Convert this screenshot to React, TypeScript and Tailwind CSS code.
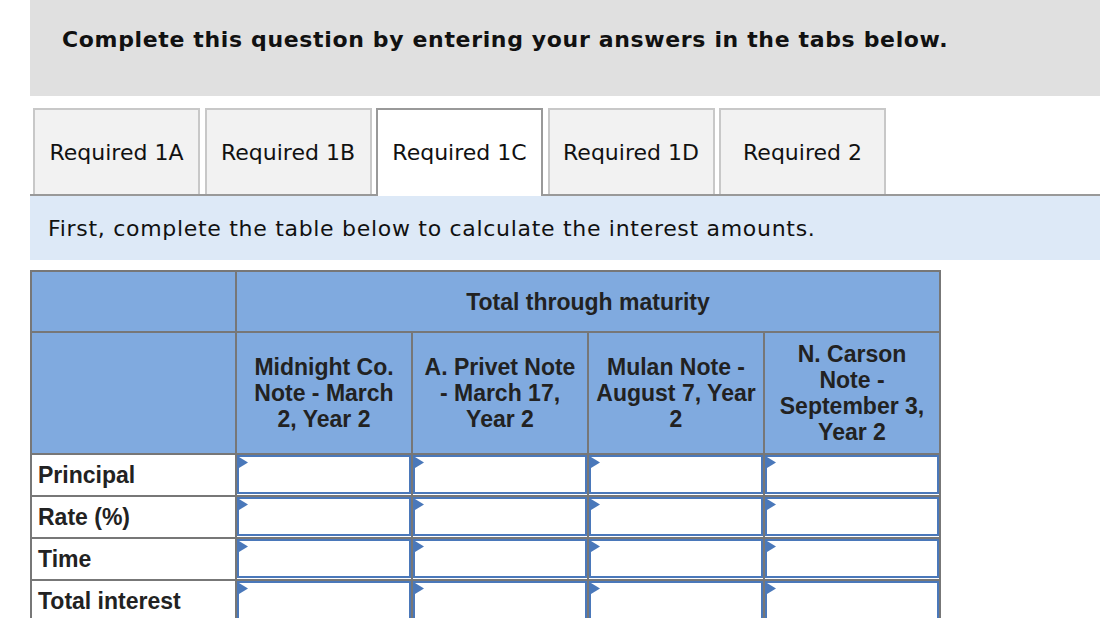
import React from "react";

const tabs = ["Required 1A", "Required 1B", "Required 1C", "Required 1D", "Required 2"];

const notes = [
  ["Midnight Co.", "Note - March", "2, Year 2"],
  ["A. Privet Note", "- March 17,", "Year 2"],
  ["Mulan Note -", "August 7, Year", "2"],
  ["N. Carson", "Note -", "September 3,", "Year 2"],
];

const rows = ["Principal", "Rate (%)", "Time", "Total interest"];

function InputCell() {
  return (
    <td className="border-2 border-[#777] p-0 align-top">
      <div className="relative h-[39px] border-2 border-[#4a78ba] bg-white">
        {/* little marker in the corner */}
        <svg className="absolute left-0 top-0" width="9" height="11" viewBox="0 0 9 11">
          <polygon points="0,0 9,5.5 0,11" fill="#4a78ba" />
        </svg>
      </div>
    </td>
  );
}

export default function App() {
  return (
    <div className="min-h-[618px] bg-white pl-[30px] font-['DejaVu_Sans',sans-serif] text-[#111]">
      {/* Instructions banner */}
      <div className="flex h-[96px] items-start bg-[#e0e0e0] pl-[32px] pt-[26px]">
        <h1 className="text-[22px] font-bold leading-[28px] tracking-[0.65px]">
          Complete this question by entering your answers in the tabs below.
        </h1>
      </div>

      {/* Tabs */}
      <div className="mt-[12px] flex border-b-2 border-[#999] pl-[3px]">
        {tabs.map((tab, i) => (
          <div
            key={tab}
            className={
              i === 2
                ? "relative -mb-[2px] mr-[4.5px] flex h-[88px] w-[167px] items-center justify-center border-2 border-b-0 border-[#999] bg-white pb-[2px] text-[22px]"
                : "mr-[4.5px] flex h-[86px] w-[167px] items-center justify-center border-2 border-b-0 border-[#c8c8c8] bg-[#f2f2f2] text-[22px]"
            }
          >
            {tab}
          </div>
        ))}
      </div>

      {/* Prompt */}
      <div className="flex h-[64px] items-center bg-[#dde9f7] pl-[18px] text-[22px] tracking-[0.7px]">
        First, complete the table below to calculate the interest amounts.
      </div>

      {/* Table */}
      <table className="mt-[10px] w-[909px] table-fixed border-collapse font-['Liberation_Sans',Arial,sans-serif] text-[23px] font-bold leading-[26px] text-[#222]">
        <colgroup>
          <col className="w-[205px]" />
          <col className="w-[176px]" />
          <col className="w-[176px]" />
          <col className="w-[176px]" />
          <col className="w-[176px]" />
        </colgroup>
        <thead>
          <tr className="h-[61px] bg-[#80aadf]">
            <th className="border-2 border-[#777]" />
            <th colSpan={4} className="border-2 border-[#777] text-center">
              Total through maturity
            </th>
          </tr>
          <tr className="h-[122px] bg-[#80aadf]">
            <th className="border-2 border-[#777]" />
            {notes.map((lines, i) => (
              <th key={i} className="border-2 border-[#777] px-1 text-center align-middle">
                {lines.map((l, j) => (
                  <div key={j} className="whitespace-nowrap">
                    {l}
                  </div>
                ))}
              </th>
            ))}
          </tr>
        </thead>
        <tbody>
          {rows.map((r) => (
            <tr key={r} className="h-[42px]">
              <td className="border-2 border-[#777] px-[6px] text-left align-middle">{r}</td>
              <InputCell />
              <InputCell />
              <InputCell />
              <InputCell />
            </tr>
          ))}
        </tbody>
      </table>
    </div>
  );
}
